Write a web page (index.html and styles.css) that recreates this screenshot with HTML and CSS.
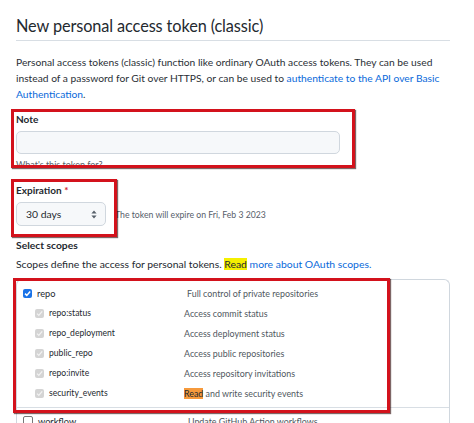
FILE: index.html
```html
<!DOCTYPE html>
<html>
<head>
<meta charset="utf-8">
<link rel="stylesheet" href="styles.css">
</head>
<body>
<div class="page">
  <h1 class="title">New personal access token (classic)</h1>
  <p class="intro">Personal access tokens (classic) function like ordinary OAuth access tokens. They can be used instead of a password for Git over HTTPS, or can be used to <a class="link">authenticate to the API over Basic Authentication</a>.</p>

  <div class="group note-group hl hl-note">
    <label class="label">Note</label>
    <div class="input"></div>
    <div class="hint">What's this token for?</div>
  </div>

  <div class="group exp-group hl hl-exp">
    <label class="label">Expiration <span class="req">*</span></label>
    <div class="exp-row">
      <div class="select">
        <span>30 days</span>
        <svg class="arrows" width="6" height="9" viewBox="0 0 6 9"><path d="M3 0.5 L5.6 3.6 H0.4 Z M3 8.5 L0.4 5.4 H5.6 Z" fill="#57606a"/></svg>
      </div>
      <span class="exp-note">The token will expire on Fri, Feb 3 2023</span>
    </div>
  </div>

  <h2 class="sub">Select scopes</h2>
  <p class="scopes-desc">Scopes define the access for personal tokens. <mark class="hy">Read</mark> <a class="link">more about OAuth scopes.</a></p>

  <div class="scopes">
    <div class="block hl hl-scopes">
      <div class="row">
        <span class="cb cb-on"><svg width="9" height="9" viewBox="0 0 9 9"><path d="M2 4.6 L3.8 6.4 L7.2 2.4" stroke="#fff" stroke-width="1.5" fill="none"/></svg></span>
        <span class="name main">repo</span>
        <span class="desc">Full control of private repositories</span>
      </div>
      <div class="row child">
        <span class="cb cb-dis"><svg width="9" height="9" viewBox="0 0 9 9"><path d="M2 4.6 L3.8 6.4 L7.2 2.4" stroke="#f2f2f2" stroke-width="1.3" fill="none"/></svg></span>
        <span class="name">repo:status</span>
        <span class="desc">Access commit status</span>
      </div>
      <div class="row child">
        <span class="cb cb-dis"><svg width="9" height="9" viewBox="0 0 9 9"><path d="M2 4.6 L3.8 6.4 L7.2 2.4" stroke="#f2f2f2" stroke-width="1.3" fill="none"/></svg></span>
        <span class="name">repo_deployment</span>
        <span class="desc">Access deployment status</span>
      </div>
      <div class="row child">
        <span class="cb cb-dis"><svg width="9" height="9" viewBox="0 0 9 9"><path d="M2 4.6 L3.8 6.4 L7.2 2.4" stroke="#f2f2f2" stroke-width="1.3" fill="none"/></svg></span>
        <span class="name">public_repo</span>
        <span class="desc">Access public repositories</span>
      </div>
      <div class="row child">
        <span class="cb cb-dis"><svg width="9" height="9" viewBox="0 0 9 9"><path d="M2 4.6 L3.8 6.4 L7.2 2.4" stroke="#f2f2f2" stroke-width="1.3" fill="none"/></svg></span>
        <span class="name">repo:invite</span>
        <span class="desc">Access repository invitations</span>
      </div>
      <div class="row child">
        <span class="cb cb-dis"><svg width="9" height="9" viewBox="0 0 9 9"><path d="M2 4.6 L3.8 6.4 L7.2 2.4" stroke="#f2f2f2" stroke-width="1.3" fill="none"/></svg></span>
        <span class="name">security_events</span>
        <span class="desc"><mark class="ho">Read</mark> and write security events</span>
      </div>
    </div>
    <div class="block">
      <div class="row">
        <span class="cb cb-off"></span>
        <span class="name main">workflow</span>
        <span class="desc">Update GitHub Action workflows</span>
      </div>
    </div>
  </div>
</div>
</body>
</html>
```

FILE: styles.css
```css
* { box-sizing: border-box; }
html, body { margin: 0; padding: 0; background: #fff; }
body {
  font-family: Lato, "Noto Sans", sans-serif;
  color: #24292f;
  font-size: 10px;
  overflow: hidden;
  height: 423px;
}
.page { padding: 0 24px 0 16px; }

.title {
  margin: 0;
  padding-top: 12px;
  font-size: 16.3px;
  line-height: 28px;
  font-weight: 400;
  letter-spacing: -0.1px;
  border-bottom: 1px solid #d8dee4;
  height: 41px;
}
.intro {
  margin: 13px 0 0;
  font-size: 10.25px;
  line-height: 16px;
  color: #2a2f35;
}
.link { color: #0969da; text-decoration: none; }

.hl { position: relative; }
.hl::after {
  content: "";
  position: absolute;
  border: 3px solid #d3121c;
  box-shadow: 1px 1px 1px rgba(40,0,0,0.6);
  pointer-events: none;
}
.hl-note::after { left: -5px; top: -3px; width: 338px; height: 53px; }
.hl-exp::after { left: -5px; top: -4px; width: 100px; height: 52px; }
.hl-scopes::after { left: -4px; top: -2px; width: 371px; height: 129px; }

.group { display: flex; flex-direction: column; align-items: flex-start; }
.note-group { margin-top: 10px; }
.label { font-weight: 700; font-size: 10px; line-height: 14px; }
.input {
  margin-top: 5px;
  width: 324px;
  height: 23px;
  background: #f6f8fa;
  border: 1px solid #d0d7de;
  border-radius: 5px;
}
.hint { margin-top: 4px; font-size: 9px; line-height: 14px; color: #57606a; }

.exp-group { margin-top: 11px; }
.req { color: #cf222e; }
.exp-row { margin-top: 5px; display: flex; align-items: center; gap: 9px; }
.select {
  width: 90px;
  height: 24px;
  border: 1px solid #d0d7de;
  border-radius: 5px;
  background: #f6f8fa;
  display: flex;
  align-items: center;
  justify-content: space-between;
  padding: 0 8px 0 9px;
  font-size: 10.4px;
}
.exp-note { font-size: 8.7px; color: #57606a; }

.sub { margin: 12px 0 0; font-size: 10.3px; line-height: 14px; font-weight: 700; }
.scopes-desc { margin: 5px 0 0; font-size: 10.4px; line-height: 14px; }
.hy { background: #f5f000; color: #24292f; padding: 0; }
.ho { background: #f69a3c; color: #24292f; padding: 0; }

.scopes {
  margin-top: 8px;
  border: 1px solid #d0d7de;
  border-bottom: none;
  border-radius: 6px 6px 0 0;
  height: 200px;
}
.block { padding: 3px 0 4px 6px; }
.block + .block { border-top: 1px solid #d8dee4; padding-top: 3px; }
.row { display: flex; align-items: center; height: 20px; font-size: 8.9px; }
.row.child { padding-left: 12px; }
.cb {
  width: 9px; height: 9px; flex: none;
  border-radius: 2px;
  display: flex; align-items: center; justify-content: center;
  margin-right: 5px;
}
.cb-on { background: #1a73e8; }
.cb-dis { background: #d4d4d4; }
.cb-off { border: 1px solid #767676; background: #fff; width: 10px; height: 10px; }
.name { width: 150px; flex: none; font-size: 8.6px; color: #24292f; }
.name.main { font-size: 9.2px; }
.child .name { width: 135px; }
.desc { color: #4f5760; }
```
